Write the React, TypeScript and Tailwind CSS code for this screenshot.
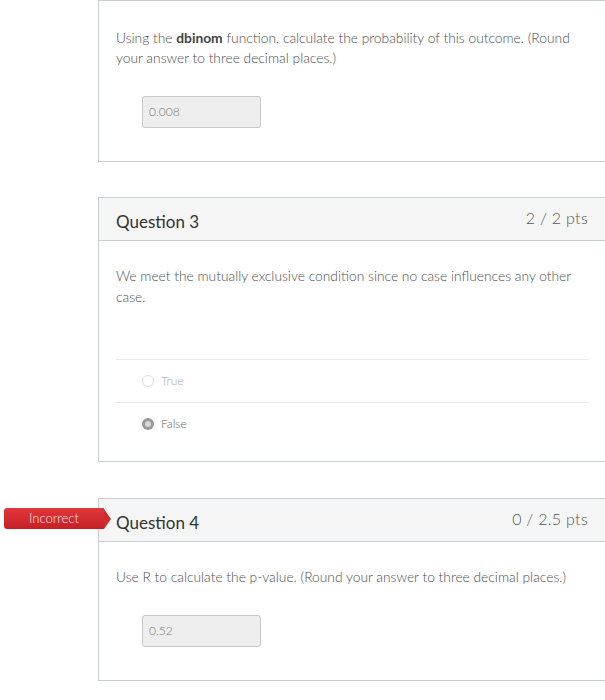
import React from "react";

function Answer({ value }: { value: string }) {
  return (
    <div className="ml-[26px] flex h-[32px] w-[119px] items-center rounded-[3px] border border-[#c8c8c8] bg-[#eeeeee] px-[6px] text-[12px] font-light text-[#777]">
      {value}
    </div>
  );
}

function Header({ title, pts }: { title: string; pts: string }) {
  return (
    <div className="flex h-[43px] items-center justify-between border-b border-[#c7cdd1] bg-[#f5f5f5] pl-[17px] pr-[21px]">
      <span className="pt-[6px] text-[17px] text-[#333]">{title}</span>
      <span className="-mt-[2px] text-[16px] font-light tracking-[0.3px] text-[#555]">{pts}</span>
    </div>
  );
}

function Radio({ label, checked }: { label: string; checked?: boolean }) {
  return (
    <div className="flex h-[42px] items-center gap-[7px] pl-[26px]">
      {checked ? (
        <span className="flex h-[12px] w-[12px] items-center justify-center rounded-full bg-[#999]">
          <span className="h-[6px] w-[6px] rounded-full bg-[#d8d8d8]" />
        </span>
      ) : (
        <span className="h-[12px] w-[12px] rounded-full border border-[#dcdcdc] bg-white" />
      )}
      <span className={`text-[12px] font-light ${checked ? "text-[#666]" : "text-[#aaa]"}`}>{label}</span>
    </div>
  );
}

export default function App() {
  return (
    <div
      className="relative h-[700px] w-[605px] overflow-hidden bg-white"
      style={{ fontFamily: "Lato, 'Open Sans', sans-serif" }}
    >
      <div className="ml-[98px] w-[512px]">
        {/* question 2 (tail) */}
        <div className="border-x border-b border-t border-[#c7cdd1] pb-[33px] pl-[17px] pt-[27px]">
          <p className="max-w-[470px] text-[13.8px] font-light leading-[20px] text-[#4d4d4d]">
            Using the <strong className="font-bold text-[#444]">dbinom</strong> function, calculate the probability
            of this outcome. (Round your answer to three decimal places.)
          </p>
          <div className="mt-[28px]">
            <Answer value="0.008" />
          </div>
        </div>

        {/* question 3 */}
        <div className="mt-[35px] border border-[#c7cdd1]">
          <Header title="Question 3" pts="2 / 2 pts" />
          <div className="pb-[16px] pl-[17px] pr-[20px] pt-[24px]">
            <p className="max-w-[470px] text-[13.8px] font-light leading-[21px] text-[#4d4d4d]">
              We meet the mutually exclusive condition since no case influences any other case.
            </p>
            <div className="mt-[52px] border-t border-[#ececec]">
              <Radio label="True" />
              <div className="border-t border-[#ececec]">
                <Radio label="False" checked />
              </div>
            </div>
          </div>
        </div>

        {/* question 4 */}
        <div className="mt-[36px] border border-[#c7cdd1]">
          <Header title="Question 4" pts="0 / 2.5 pts" />
          <div className="pb-[33px] pl-[17px] pt-[25px]">
            <p className="text-[13.8px] font-light leading-[20px] text-[#4d4d4d]">
              Use R to calculate the p-value. (Round your answer to three decimal places.)
            </p>
            <div className="mt-[28px]">
              <Answer value="0.52" />
            </div>
          </div>
        </div>
      </div>

      {/* incorrect badge */}
      <div className="absolute left-[4px] top-[508px] flex h-[21px] items-center">
        <div className="flex h-[21px] w-[100px] items-center justify-center rounded-l-[3px] bg-gradient-to-b from-[#e0383c] to-[#c41f24] text-[13px] font-light text-[#fbe4e4]">
          Incorrect
        </div>
        <div className="h-0 w-0 border-y-[10.5px] border-l-[7px] border-y-transparent border-l-[#cf2a2f]" />
      </div>
    </div>
  );
}
